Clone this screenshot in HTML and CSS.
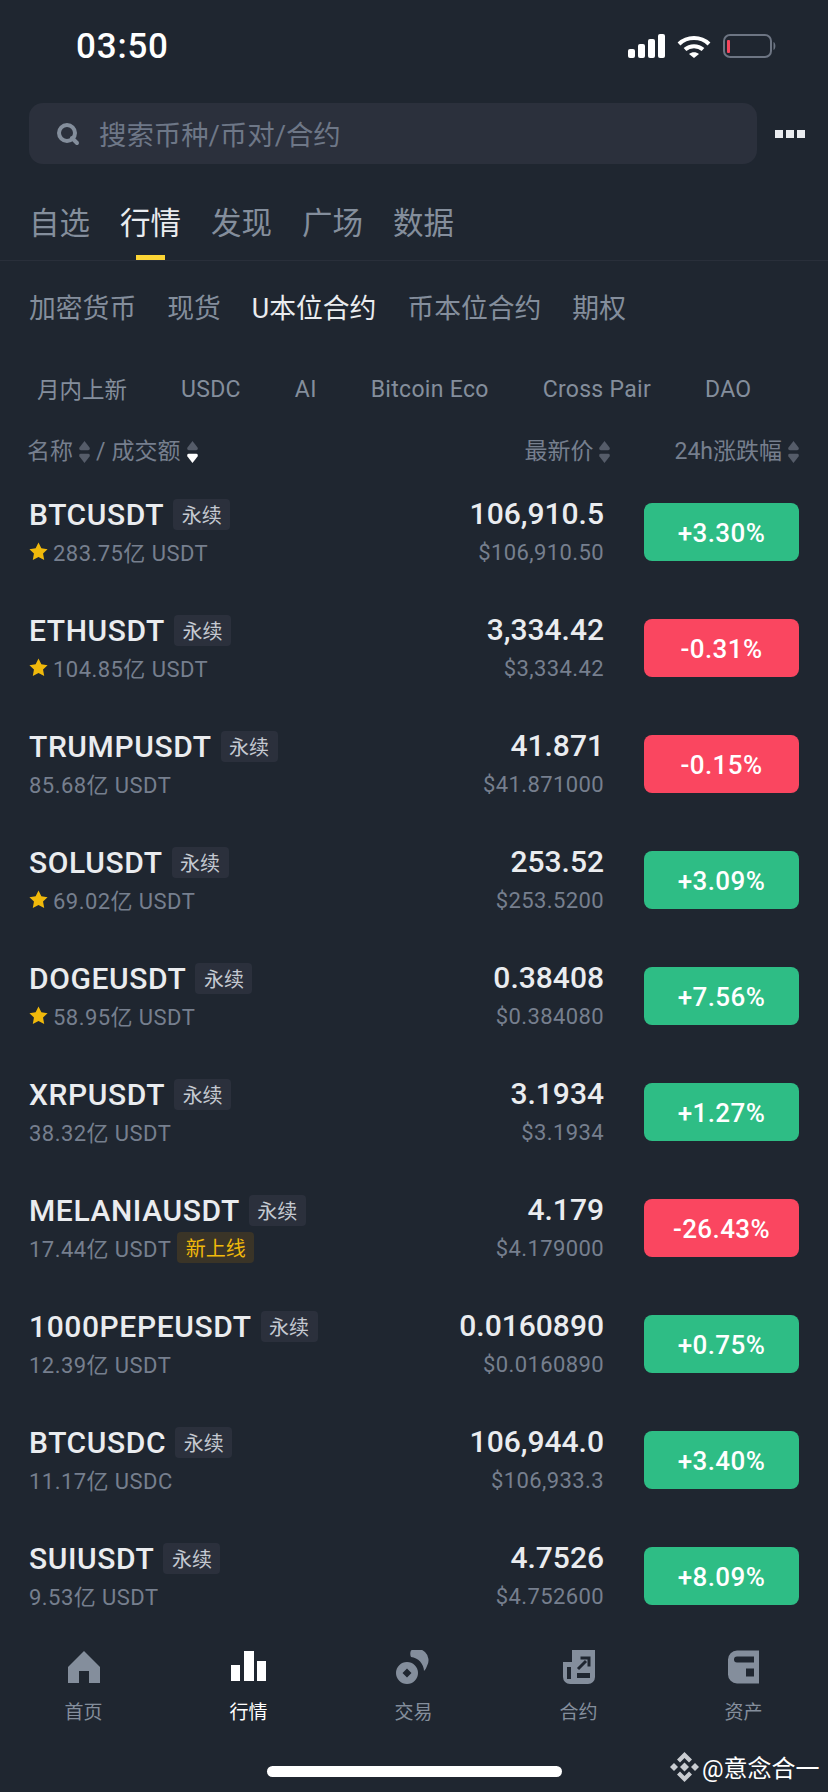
FILE: index.html
```html
<!DOCTYPE html>
<html lang="zh-CN">
<head>
  <meta charset="UTF-8" />
  <meta name="viewport" content="width=device-width, initial-scale=1" />
  <title>行情</title>
  <link rel="stylesheet" href="styles.css">
</head>
<body>
  <svg class="defs" width="0" height="0">
    <symbol id="sort" viewBox="0 0 12 24">
      <path d="M6 0 L11.500 7 Q12.500 10 10 10 H2 Q-.5 10 .5 7 Z"/>
      <path class="sort-low" d="M6 24 L11.500 17 Q12.500 14 10 14 H2 Q-.5 14 .5 17 Z"/>
    </symbol>
    <symbol id="star" viewBox="0 0 18 18">
      <path d="M9 .5 L11.700 6 L17.600 6.800 L13.300 11 L14.400 17 L9 14.100 L3.600 17 L4.700 11 L.4 6.800 L6.300 6 Z" stroke-linejoin="round"/>
    </symbol>
  </svg>

  <div class="page">
    <div class="status">
      <span class="time">03:50</span>
      <div class="status-icons">
        <svg class="signal" width="38" height="24" viewBox="0 0 38 24" fill="#fff">
          <rect x="0" y="15" width="7" height="9" rx="2"/>
          <rect x="10" y="10" width="7" height="14" rx="2"/>
          <rect x="20" y="5" width="7" height="19" rx="2"/>
          <rect x="30" y="0" width="7" height="24" rx="2"/>
        </svg>
        <svg class="wifi" width="34" height="23" viewBox="0 0 34 23" fill="none" stroke="#fff" stroke-width="4">
          <path d="M2 9 C10 1 24 1 32 9"/>
          <path d="M8 14.500 C13 10 21 10 26 14.500"/>
          <path d="M12 19 L17 23 L22 19 C19 16.500 15 16.500 12 19 Z" fill="#fff" stroke="none"/>
        </svg>
        <svg class="battery" width="54" height="24" viewBox="0 0 54 24" fill="none">
          <rect x="1" y="1" width="47" height="22" rx="6" stroke="#6d7583" stroke-width="2"/>
          <rect x="4" y="6" width="3" height="13" rx="1" fill="#f6465d"/>
          <path d="M50.500 8 C53 9 53 15 50.500 16 Z" fill="#6d7583"/>
        </svg>
      </div>
    </div>

    <div class="search-row">
      <div class="search">
        <svg width="24" height="24" viewBox="0 0 24 24" fill="none" stroke="#848e9c" stroke-width="4">
          <circle cx="11" cy="11" r="8"/>
          <path d="M16 16 L21 21" stroke-linecap="round"/>
        </svg>
        <span>搜索币种/币对/合约</span>
      </div>
      <div class="more"><i></i><i></i><i></i></div>
    </div>

    <div class="tabs">
      <a>自选</a>
      <a class="on">行情</a>
      <a>发现</a>
      <a>广场</a>
      <a>数据</a>
    </div>

    <div class="subtabs">
      <a>加密货币</a>
      <a>现货</a>
      <a class="on">U本位合约</a>
      <a>币本位合约</a>
      <a>期权</a>
    </div>

    <div class="filters">
      <a class="filter-new">月内上新</a>
      <a>USDC</a>
      <a>AI</a>
      <a>Bitcoin Eco</a>
      <a>Cross Pair</a>
      <a>DAO</a>
    </div>

    <div class="thead">
      <span>名称</span><svg class="sort"><use href="#sort"/></svg>
      <span class="slash">/</span>
      <span>成交额</span><svg class="sort sort-active"><use href="#sort"/></svg>
      <span class="push">最新价</span><svg class="sort"><use href="#sort"/></svg>
      <span class="col-pct">24h涨跌幅</span><svg class="sort"><use href="#sort"/></svg>
    </div>

    <div class="list">
      <div class="row">
        <div class="info">
          <div class="name">BTCUSDT<span class="tag">永续</span></div>
          <div class="vol"><svg class="star"><use href="#star"/></svg>283.75亿 USDT</div>
        </div>
        <div class="price"><b>106,910.5</b><span>$106,910.50</span></div>
        <div class="pct up">+3.30%</div>
      </div>
      <div class="row">
        <div class="info">
          <div class="name">ETHUSDT<span class="tag">永续</span></div>
          <div class="vol"><svg class="star"><use href="#star"/></svg>104.85亿 USDT</div>
        </div>
        <div class="price"><b>3,334.42</b><span>$3,334.42</span></div>
        <div class="pct down">-0.31%</div>
      </div>
      <div class="row">
        <div class="info">
          <div class="name">TRUMPUSDT<span class="tag">永续</span></div>
          <div class="vol">85.68亿 USDT</div>
        </div>
        <div class="price"><b>41.871</b><span>$41.871000</span></div>
        <div class="pct down">-0.15%</div>
      </div>
      <div class="row">
        <div class="info">
          <div class="name">SOLUSDT<span class="tag">永续</span></div>
          <div class="vol"><svg class="star"><use href="#star"/></svg>69.02亿 USDT</div>
        </div>
        <div class="price"><b>253.52</b><span>$253.5200</span></div>
        <div class="pct up">+3.09%</div>
      </div>
      <div class="row">
        <div class="info">
          <div class="name">DOGEUSDT<span class="tag">永续</span></div>
          <div class="vol"><svg class="star"><use href="#star"/></svg>58.95亿 USDT</div>
        </div>
        <div class="price"><b>0.38408</b><span>$0.384080</span></div>
        <div class="pct up">+7.56%</div>
      </div>
      <div class="row">
        <div class="info">
          <div class="name">XRPUSDT<span class="tag">永续</span></div>
          <div class="vol">38.32亿 USDT</div>
        </div>
        <div class="price"><b>3.1934</b><span>$3.1934</span></div>
        <div class="pct up">+1.27%</div>
      </div>
      <div class="row">
        <div class="info">
          <div class="name">MELANIAUSDT<span class="tag">永续</span></div>
          <div class="vol">17.44亿 USDT<span class="tag tag-new">新上线</span></div>
        </div>
        <div class="price"><b>4.179</b><span>$4.179000</span></div>
        <div class="pct down">-26.43%</div>
      </div>
      <div class="row">
        <div class="info">
          <div class="name">1000PEPEUSDT<span class="tag">永续</span></div>
          <div class="vol">12.39亿 USDT</div>
        </div>
        <div class="price"><b>0.0160890</b><span>$0.0160890</span></div>
        <div class="pct up">+0.75%</div>
      </div>
      <div class="row">
        <div class="info">
          <div class="name">BTCUSDC<span class="tag">永续</span></div>
          <div class="vol">11.17亿 USDC</div>
        </div>
        <div class="price"><b>106,944.0</b><span>$106,933.3</span></div>
        <div class="pct up">+3.40%</div>
      </div>
      <div class="row">
        <div class="info">
          <div class="name">SUIUSDT<span class="tag">永续</span></div>
          <div class="vol">9.53亿 USDT</div>
        </div>
        <div class="price"><b>4.7526</b><span>$4.752600</span></div>
        <div class="pct up">+8.09%</div>
      </div>
    </div>

    <div class="nav">
      <a>
        <svg width="32" height="32" viewBox="0 0 32 32" fill="#848e9c">
          <path fill-rule="evenodd" d="M16 0 L32 16 V32 H21 V20 H11 V32 H0 V16 Z"/>
        </svg>
        首页
      </a>
      <a class="on">
        <svg width="36" height="32" viewBox="0 0 36 32" fill="#fff">
          <rect x="0" y="14" width="9" height="16"/>
          <rect x="13" y="0" width="10" height="30"/>
          <rect x="26" y="10" width="9" height="20"/>
        </svg>
        行情
      </a>
      <a>
        <svg width="35" height="34" viewBox="0 0 35 34" fill="#848e9c">
          <path fill-rule="evenodd" d="M11 12 A11 11 0 1 1 11 34 A11 11 0 1 1 11 12 Z M11 18.500 L6.500 23 L11 27.500 L15.500 23 Z"/>
          <path d="M13 1.500 A11.500 11.500 0 0 1 29 17 A11.500 11.500 0 0 1 26 22 C26 15 20 8.500 13 8 C12 6 12 3.500 13 1.500 Z" transform="translate(2 -1)"/>
        </svg>
        交易
      </a>
      <a>
        <svg width="32" height="34" viewBox="0 0 32 34" fill="#848e9c">
          <path fill-rule="evenodd" d="M9 0 H32 V27 A7 7 0 0 1 25 34 H7 A7 7 0 0 1 0 27 V12 H9 Z M4 17 V29 H8 V17 Z M14 23 V28 H27 V23 Z"/>
          <path d="M15 19 L23 11 M17.500 8 H26 V16.500" fill="none" stroke="#1f2630" stroke-width="3"/>
        </svg>
        合约
      </a>
      <a>
        <svg width="32" height="33" viewBox="0 0 32 33" fill="#848e9c">
          <path fill-rule="evenodd" d="M9 0 H31 V33 H9 A9 9 0 0 1 0 24 V9 A9 9 0 0 1 9 0 Z M9 6 A3 3 0 0 0 9 12 H26 V6 Z M18 18 V26 H26 V18 Z"/>
        </svg>
        资产
      </a>
    </div>
    <div class="home-bar"></div>

    <div class="mark">
      <svg width="29" height="30" viewBox="0 0 29 30" fill="#c9ccd1">
        <path d="M14.500 0 L22 7.500 L19 10.500 L14.500 6 L10 10.500 L7 7.500 Z"/>
        <path d="M14.500 30 L22 22.500 L19 19.500 L14.500 24 L10 19.500 L7 22.500 Z"/>
        <path d="M4 11 L8 15 L4 19 L0 15 Z"/>
        <path d="M25 11 L29 15 L25 19 L21 15 Z"/>
        <path d="M14.500 10.500 L19 15 L14.500 19.500 L10 15 Z"/>
      </svg>
      <span>@意念合一</span>
    </div>
  </div>
</body>
</html>
```

FILE: styles.css
```css
* { box-sizing: border-box; margin: 0; padding: 0; }
body {
  background: #1f2630;
  color: #eaecef;
  font-family: Roboto, "Noto Sans CJK SC", sans-serif;
}
.defs { position: absolute; }
.page { position: relative; width: 828px; height: 1792px; overflow: hidden; }

.status {
  height: 92px;
  display: flex;
  align-items: center;
  justify-content: space-between;
  padding: 0 51px 0 76px;
}
.time { font-size: 35px; font-weight: 500; letter-spacing: .8px; color: #fff; }
.status-icons { display: flex; align-items: center; gap: 11px; }
.wifi { margin-right: 1px; }

.search-row { height: 72px; padding: 11px 0 0 29px; display: flex; gap: 18px; align-items: flex-start; }
.search {
  width: 728px;
  height: 61px;
  background: #2b303c;
  border-radius: 14px;
  display: flex;
  align-items: center;
  gap: 19px;
  padding-left: 27px;
  font-size: 27.400px;
  color: #6e7787;
}
.search span { margin-bottom: 2px; }
.more { height: 61px; display: flex; align-items: center; gap: 3px; }
.more i { width: 8px; height: 8px; background: #eaecef; }

.tabs {
  height: 97px;
  padding: 41px 0 0 29px;
  display: flex;
  gap: 30px;
  border-bottom: 1px solid #292f3a;
  font-size: 30.500px;
  color: #848e9c;
}
.tabs a { display: flex; flex-direction: column; align-items: center; line-height: 38px; }
.tabs a.on { color: #eaecef; }
.tabs a.on::after { content: ""; width: 29px; height: 5px; margin-top: 12px; background: #fcd535; }

.subtabs {
  height: 92px;
  padding: 4px 0 0 29px;
  display: flex;
  align-items: center;
  gap: 31px;
  font-size: 26.800px;
  line-height: 34px;
  color: #848e9c;
}
.subtabs a.on { color: #eaecef; }

.filters {
  height: 70px;
  padding: 3px 0 0 37px;
  display: flex;
  align-items: center;
  gap: 54px;
  font-size: 23px;
  line-height: 30px;
  letter-spacing: .3px;
  color: #848e9c;
}
.filter-new { font-size: 22.500px; letter-spacing: 0; }

.thead {
  height: 51px;
  padding: 6px 29px 0 27px;
  display: flex;
  align-items: center;
  font-size: 23px;
  line-height: 30px;
  color: #767f8e;
}
.thead .slash { margin: 0 6px 0 6px; }
.thead .push { margin-left: auto; }
.thead .col-pct { margin-left: 64px; }
.sort { width: 11px; height: 22px; margin-left: 6px; fill: #555c69; --low: #555c69; }
.sort-active { --low: #fff; }
.sort-low { fill: var(--low); }

.row {
  height: 116px;
  padding: 0 29px;
  display: flex;
  align-items: center;
}
.info { flex: 1; }
.name {
  height: 38px;
  padding-top: 2px;
  display: flex;
  align-items: center;
  font-size: 30px;
  font-weight: 500;
  letter-spacing: .6px;
  color: #eaecef;
}
.tag {
  width: 57px;
  height: 31px;
  margin-left: 9px;
  display: flex;
  align-items: center;
  justify-content: center;
  background: #2b303c;
  border-radius: 4px;
  font-size: 20px;
  font-weight: 400;
  letter-spacing: 0;
  color: #c4c9d1;
}
.tag-new { width: 77px; background: #3a3427; color: #f0b90b; margin-left: 6px; }
.vol { height: 38px; display: flex; align-items: center; font-size: 22px; letter-spacing: .45px; color: #767f8e; }
.star { width: 19px; height: 19px; margin-right: 5px; fill: #f0b90b; }
.price { text-align: right; margin-right: 40px; }
.price b { display: block; height: 38px; line-height: 39px; font-size: 30px; font-weight: 500; color: #eaecef; }
.price span { display: block; height: 38px; line-height: 42px; font-size: 22px; letter-spacing: .4px; color: #767f8e; }
.pct {
  width: 155px;
  height: 58px;
  padding-top: 2px;
  display: flex;
  align-items: center;
  justify-content: center;
  border-radius: 8px;
  font-size: 26px;
  font-weight: 500;
  letter-spacing: .4px;
  color: #fff;
}
.up { background: #2ebd85; }
.down { background: #fa4660; }

.nav {
  height: 116px;
  padding: 16px 0 0 1px;
  display: grid;
  grid-template-columns: repeat(5, 165px);
}
.nav a {
  display: flex;
  flex-direction: column;
  align-items: center;
  font-size: 19px;
  color: #848e9c;
  line-height: 24px;
}
.nav a svg { height: 34px; margin-bottom: 17px; }
.nav a.on { color: #fff; }

.home-bar {
  width: 295px;
  height: 11px;
  margin: 16px 0 0 267px;
  background: #fff;
  border-radius: 6px;
}

.mark {
  position: absolute;
  left: 670px;
  bottom: 8px;
  display: flex;
  align-items: center;
  gap: 3px;
  font-size: 24px;
  color: #fff;
}
```
